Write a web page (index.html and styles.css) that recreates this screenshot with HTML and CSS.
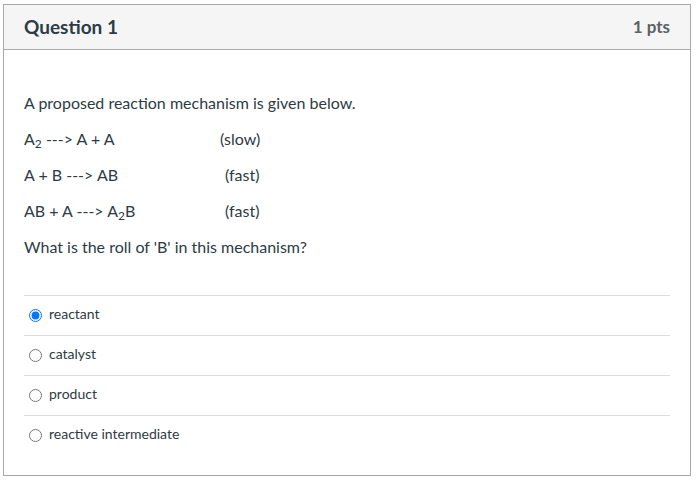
FILE: index.html
```html
<!DOCTYPE html>
<html>
<head>
<meta charset="utf-8">
<link rel="stylesheet" href="styles.css">
</head>
<body>
<div class="question">
  <div class="header">
    <span class="title">Question 1</span>
    <span class="pts">1 pts</span>
  </div>
  <div class="content">
    <p>A proposed reaction mechanism is given below.</p>
    <p class="step"><span class="eq">A<sub>2</sub> ---&gt; A + A</span><span class="rate r-slow">(slow)</span></p>
    <p class="step"><span class="eq">A + B ---&gt; AB</span><span class="rate r-fast">(fast)</span></p>
    <p class="step"><span class="eq">AB + A ---&gt; A<sub>2</sub>B</span><span class="rate r-fast">(fast)</span></p>
    <p>What is the roll of 'B' in this mechanism?</p>
  </div>
  <div class="answers">
    <label class="answer"><input type="radio" name="q1" checked><span>reactant</span></label>
    <label class="answer"><input type="radio" name="q1"><span>catalyst</span></label>
    <label class="answer"><input type="radio" name="q1"><span>product</span></label>
    <label class="answer"><input type="radio" name="q1"><span>reactive intermediate</span></label>
  </div>
</div>
</body>
</html>
```

FILE: styles.css
```css
html, body {
  margin: 0;
  padding: 0;
  background: #ffffff;
}
body {
  font-family: Lato, "Open Sans", sans-serif;
  color: #2d3b45;
  padding: 4px 0 0 3px;
}
.question {
  width: 686px;
  border: 1px solid #a8a8a8;
  box-sizing: content-box;
}
.header {
  display: flex;
  justify-content: space-between;
  align-items: center;
  height: 42px;
  padding: 0 20px 2px 20px;
  background: #f5f5f5;
  border-bottom: 1px solid #a8a8a8;
}
.title {
  font-size: 19px;
  font-weight: 700;
  color: #2d3b45;
}
.pts {
  font-size: 17px;
  font-weight: 700;
  color: #5b6166;
}
.content {
  padding: 29px 20px 0 20px;
  font-size: 16px;
}
.content p {
  margin: 12px 0;
  line-height: 24px;
}
.step {
  display: flex;
}
.eq {
  width: 196px;
  flex: none;
}
.r-fast {
  padding-left: 5px;
}
sub {
  font-size: 12px;
  line-height: 0;
  vertical-align: -3px;
}
.answers {
  margin: 36px 20px 20px 20px;
}
.answer {
  display: flex;
  align-items: center;
  height: 39px;
  border-top: 1px solid #dcdcdc;
  font-size: 14px;
  cursor: pointer;
}
.answer input {
  margin: 0 7px 1px 5px;
  width: 13px;
  height: 13px;
}
.answer span {
  position: relative;
  top: -2px;
}
```
